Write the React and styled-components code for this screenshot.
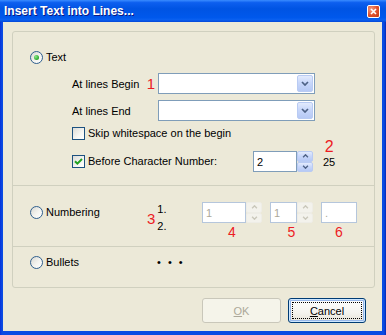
import styled, { createGlobalStyle } from 'styled-components';

const GlobalStyle = createGlobalStyle`
  html, body { margin: 0; padding: 0; background: #ffffff; }
  body {
    font-family: 'Liberation Sans', Arial, sans-serif;
    font-size: 11px;
    color: #000;
  }
`;

function Chevron({ up, color = '#4d6185' }) {
  return (
    <svg width="8" height="5" viewBox="0 0 8 5">
      <path
        d={up ? 'M1 4 L4 1 L7 4' : 'M1 1 L4 4 L7 1'}
        fill="none"
        stroke={color}
        strokeWidth="1.7"
      />
    </svg>
  );
}

function Radio({ checked, label }) {
  return (
    <OptionRow>
      <RadioDot $checked={checked} />
      <span>{label}</span>
    </OptionRow>
  );
}

function Check({ checked, label }) {
  return (
    <OptionRow>
      <CheckBox>
        {checked && (
          <svg width="9" height="9" viewBox="0 0 9 9">
            <path d="M1 4.2 L3.4 6.6 L8 2" fill="none" stroke="#21a121" strokeWidth="2" />
          </svg>
        )}
      </CheckBox>
      <span>{label}</span>
    </OptionRow>
  );
}

function ComboBox() {
  return (
    <Combo>
      <ComboButton>
        <Chevron />
      </ComboButton>
    </Combo>
  );
}

function Spin({ value, width, disabled, noButtons }) {
  return (
    <SpinBox>
      <Edit $w={width} $disabled={disabled}>{value}</Edit>
      {!noButtons && (
        <SpinButtons>
          <SpinButton $disabled={disabled}>
            <Chevron up color={disabled ? '#c9c7ba' : '#4d6185'} />
          </SpinButton>
          <SpinButton $disabled={disabled}>
            <Chevron color={disabled ? '#c9c7ba' : '#4d6185'} />
          </SpinButton>
        </SpinButtons>
      )}
    </SpinBox>
  );
}

export default function App() {
  return (
    <>
      <GlobalStyle />
      <Window>
        <TitleBar>
          <span>Insert Text into Lines...</span>
          <CloseBox>
            <svg width="7" height="7" viewBox="0 0 7 7">
              <path d="M1 1 L6 6 M6 1 L1 6" stroke="#fff" strokeWidth="1.6" />
            </svg>
          </CloseBox>
        </TitleBar>

        <Body>
          <GroupBox>
            <TextSection>
              <Radio checked label="Text" />
              <Fields>
                <FieldRow>
                  <FieldLabel>
                    At lines Begin
                    <Marker>1</Marker>
                  </FieldLabel>
                  <ComboBox />
                </FieldRow>
                <FieldRow $top={6}>
                  <FieldLabel>At lines End</FieldLabel>
                  <ComboBox />
                </FieldRow>
                <FieldRow $top={6}>
                  <Check label="Skip whitespace on the begin" />
                </FieldRow>
                <FieldRow $top={11}>
                  <CheckCell>
                    <Check checked label="Before Character Number:" />
                  </CheckCell>
                  <Spin value="2" width={44} />
                  <Count>
                    <Marker $over>2</Marker>
                    25
                  </Count>
                </FieldRow>
              </Fields>
            </TextSection>

            <NumberSection>
              <OptionCell $top={4}>
                <Radio label="Numbering" />
              </OptionCell>
              <NumberSample>
                <Marker>3</Marker>
                <SampleList>
                  <span>1.</span>
                  <span>2.</span>
                </SampleList>
              </NumberSample>
              <SpinGroups>
                <SpinColumn>
                  <Spin value="1" width={44} disabled />
                  <SpinTag>4</SpinTag>
                </SpinColumn>
                <SpinColumn>
                  <Spin value="1" width={27} disabled />
                  <SpinTag>5</SpinTag>
                </SpinColumn>
                <SpinColumn>
                  <Spin value="." width={36} disabled noButtons />
                  <SpinTag>6</SpinTag>
                </SpinColumn>
              </SpinGroups>
            </NumberSection>

            <BulletSection>
              <OptionCell>
                <Radio label="Bullets" />
              </OptionCell>
              <BulletSample>• • •</BulletSample>
            </BulletSection>
          </GroupBox>

          <ButtonRow>
            <Button $w={79} disabled>
              <u>O</u>K
            </Button>
            <Button $w={78} $default>
              <u>C</u>ancel
            </Button>
          </ButtonRow>
        </Body>
      </Window>
    </>
  );
}

const Window = styled.div`
  width: 386px;
  height: 335px;
  display: flex;
  flex-direction: column;
  background: linear-gradient(90deg, #0831d9 0, #0a4be3 2px, #0a4be3 calc(100% - 2px), #0627b5 100%);
  overflow: hidden;
`;

const TitleBar = styled.div`
  height: 22px;
  flex-shrink: 0;
  display: flex;
  align-items: center;
  justify-content: space-between;
  padding: 0 6px 0 4px;
  background: linear-gradient(
    180deg,
    #3a8cff 0,
    #0d5fef 12%,
    #0054e3 40%,
    #0058ec 80%,
    #0a60f0 90%,
    #0447d8 100%
  );
  color: #fff;
  font-weight: bold;
  font-size: 12px;
  text-shadow: 1px 1px #0a1883;
`;

const CloseBox = styled.span`
  width: 13px;
  height: 13px;
  box-sizing: border-box;
  border: 1px solid #fff;
  border-radius: 2px;
  background: radial-gradient(circle at 30% 30%, #f29c82, #e0502b 55%, #c23a14);
  display: flex;
  align-items: center;
  justify-content: center;
`;

const Body = styled.div`
  flex: 1;
  margin: 0 4px 4px 3px;
  background: #ece9d8;
  display: flex;
  flex-direction: column;
`;

const GroupBox = styled.div`
  margin: 9px 7px 0 9px;
  height: 257px;
  box-sizing: border-box;
  border: 1px solid #d0d0bf;
  border-radius: 3px;
  display: flex;
  flex-direction: column;
`;

const TextSection = styled.div`
  height: 153px;
  box-sizing: border-box;
  padding: 19px 0 0 17px;
  display: flex;
  flex-direction: column;
`;

const NumberSection = styled.div`
  height: 61px;
  box-sizing: border-box;
  border-top: 1px solid #d0d0bf;
  padding: 16px 0 0 17px;
  display: flex;
  align-items: flex-start;
`;

const BulletSection = styled.div`
  flex: 1;
  border-top: 1px solid #d0d0bf;
  padding: 9px 0 0 17px;
  display: flex;
  align-items: center;
  align-self: stretch;
  align-items: flex-start;
`;

const OptionRow = styled.label`
  display: flex;
  align-items: center;
  gap: 3px;
  height: 13px;
  line-height: 13px;
  white-space: nowrap;
`;

const OptionCell = styled.div`
  width: 117px;
  margin-top: ${(p) => p.$top || 0}px;
`;

const RadioDot = styled.span`
  width: 13px;
  height: 13px;
  box-sizing: border-box;
  border-radius: 50%;
  border: 1px solid #2f5f8e;
  background: linear-gradient(135deg, #d8d8d2 0, #f4f4f0 55%, #ffffff 100%);
  display: inline-flex;
  align-items: center;
  justify-content: center;
  flex-shrink: 0;
  &::after {
    content: '';
    width: 5px;
    height: 5px;
    border-radius: 50%;
    background: radial-gradient(circle at 35% 35%, #8ae88a, #1e9e1e 80%);
    display: ${(p) => (p.$checked ? 'block' : 'none')};
  }
`;

const CheckBox = styled.span`
  width: 13px;
  height: 13px;
  box-sizing: border-box;
  border: 1px solid #1c5180;
  background: linear-gradient(135deg, #dcdcd7 0, #f6f6f3 60%, #ffffff 100%);
  display: inline-flex;
  align-items: center;
  justify-content: center;
  flex-shrink: 0;
`;

const Fields = styled.div`
  margin: 9px 0 0 42px;
  display: flex;
  flex-direction: column;
`;

const FieldRow = styled.div`
  display: flex;
  align-items: center;
  margin-top: ${(p) => p.$top || 0}px;
`;

const FieldLabel = styled.span`
  width: 86px;
  padding-right: 3px;
  box-sizing: border-box;
  display: flex;
  align-items: center;
  justify-content: space-between;
  white-space: nowrap;
`;

const Marker = styled.span`
  position: relative;
  color: #ec1c24;
  font-size: 15px;
  line-height: 15px;
  ${(p) =>
    p.$over &&
    `
    position: absolute;
    left: 50%;
    bottom: 100%;
    transform: translateX(-50%);
    margin-bottom: 2px;
    font-size: 16px;
  `}
`;

const Combo = styled.div`
  width: 157px;
  height: 21px;
  box-sizing: border-box;
  border: 1px solid #7f9db9;
  background: #fff;
  padding: 1px;
  display: flex;
  justify-content: flex-end;
`;

const ComboButton = styled.span`
  width: 16px;
  height: 100%;
  box-sizing: border-box;
  border: 1px solid #b9cbf3;
  border-radius: 2px;
  background: linear-gradient(180deg, #e3ebfd 0, #c8d7fa 45%, #b6c9f5 100%);
  display: flex;
  align-items: center;
  justify-content: center;
`;

const CheckCell = styled.div`
  width: 181px;
`;

const SpinBox = styled.div`
  display: flex;
  height: 21px;
`;

const Edit = styled.div`
  width: ${(p) => p.$w}px;
  height: 100%;
  box-sizing: border-box;
  border: 1px solid ${(p) => (p.$disabled ? '#b5c6dc' : '#7f9db9')};
  background: #fff;
  color: ${(p) => (p.$disabled ? '#aca899' : '#000')};
  padding: 0 3px;
  display: flex;
  align-items: center;
`;

const SpinButtons = styled.div`
  width: 16px;
  height: 100%;
  display: flex;
  flex-direction: column;
`;

const SpinButton = styled.span`
  flex: 1;
  box-sizing: border-box;
  border: 1px solid ${(p) => (p.$disabled ? '#eeede6' : '#b9cbf3')};
  border-radius: 2px;
  background: ${(p) =>
    p.$disabled
      ? '#f3f2ec'
      : 'linear-gradient(180deg, #e3ebfd 0, #c8d7fa 45%, #b6c9f5 100%)'};
  display: flex;
  align-items: center;
  justify-content: center;
  svg { width: 7px; height: 4px; }
`;

const Count = styled.span`
  position: relative;
  margin-left: 10px;
`;

const NumberSample = styled.div`
  width: 55px;
  margin-top: -1px;
  display: flex;
  align-items: center;
  gap: 2px;
`;

const SampleList = styled.div`
  display: flex;
  flex-direction: column;
  line-height: 17px;
`;

const SpinGroups = styled.div`
  display: flex;
  gap: 8px;
`;

const SpinColumn = styled.div`
  display: flex;
  flex-direction: column;
  align-items: center;
`;

const SpinTag = styled.span`
  margin-top: 2px;
  color: #ec1c24;
  font-size: 14px;
  line-height: 14px;
`;

const BulletSample = styled.span`
  margin-left: 10px;
  line-height: 13px;
  letter-spacing: 2px;
`;

const ButtonRow = styled.div`
  margin-top: 10px;
  padding-right: 16px;
  display: flex;
  justify-content: flex-end;
  gap: 7px;
`;

const Button = styled.button`
  position: relative;
  width: ${(p) => p.$w}px;
  height: 25px;
  box-sizing: border-box;
  padding: 0;
  font-family: 'Liberation Sans', Arial, sans-serif;
  font-size: 11px;
  color: #000;
  border: 1px solid #003c74;
  border-radius: 3px;
  background: linear-gradient(180deg, #ffffff 0, #f4f3ee 60%, #e6e3d8 100%);
  ${(p) =>
    p.$default &&
    `
    box-shadow: inset 0 0 0 1px #cee7ff, inset 0 0 0 2px #98b8ea;
    &::after {
      content: '';
      position: absolute;
      inset: 3px;
      border: 1px dotted #000;
    }
  `}
  &:disabled {
    border-color: #c9c7ba;
    background: #f5f4ea;
    color: #aca899;
  }
`;
